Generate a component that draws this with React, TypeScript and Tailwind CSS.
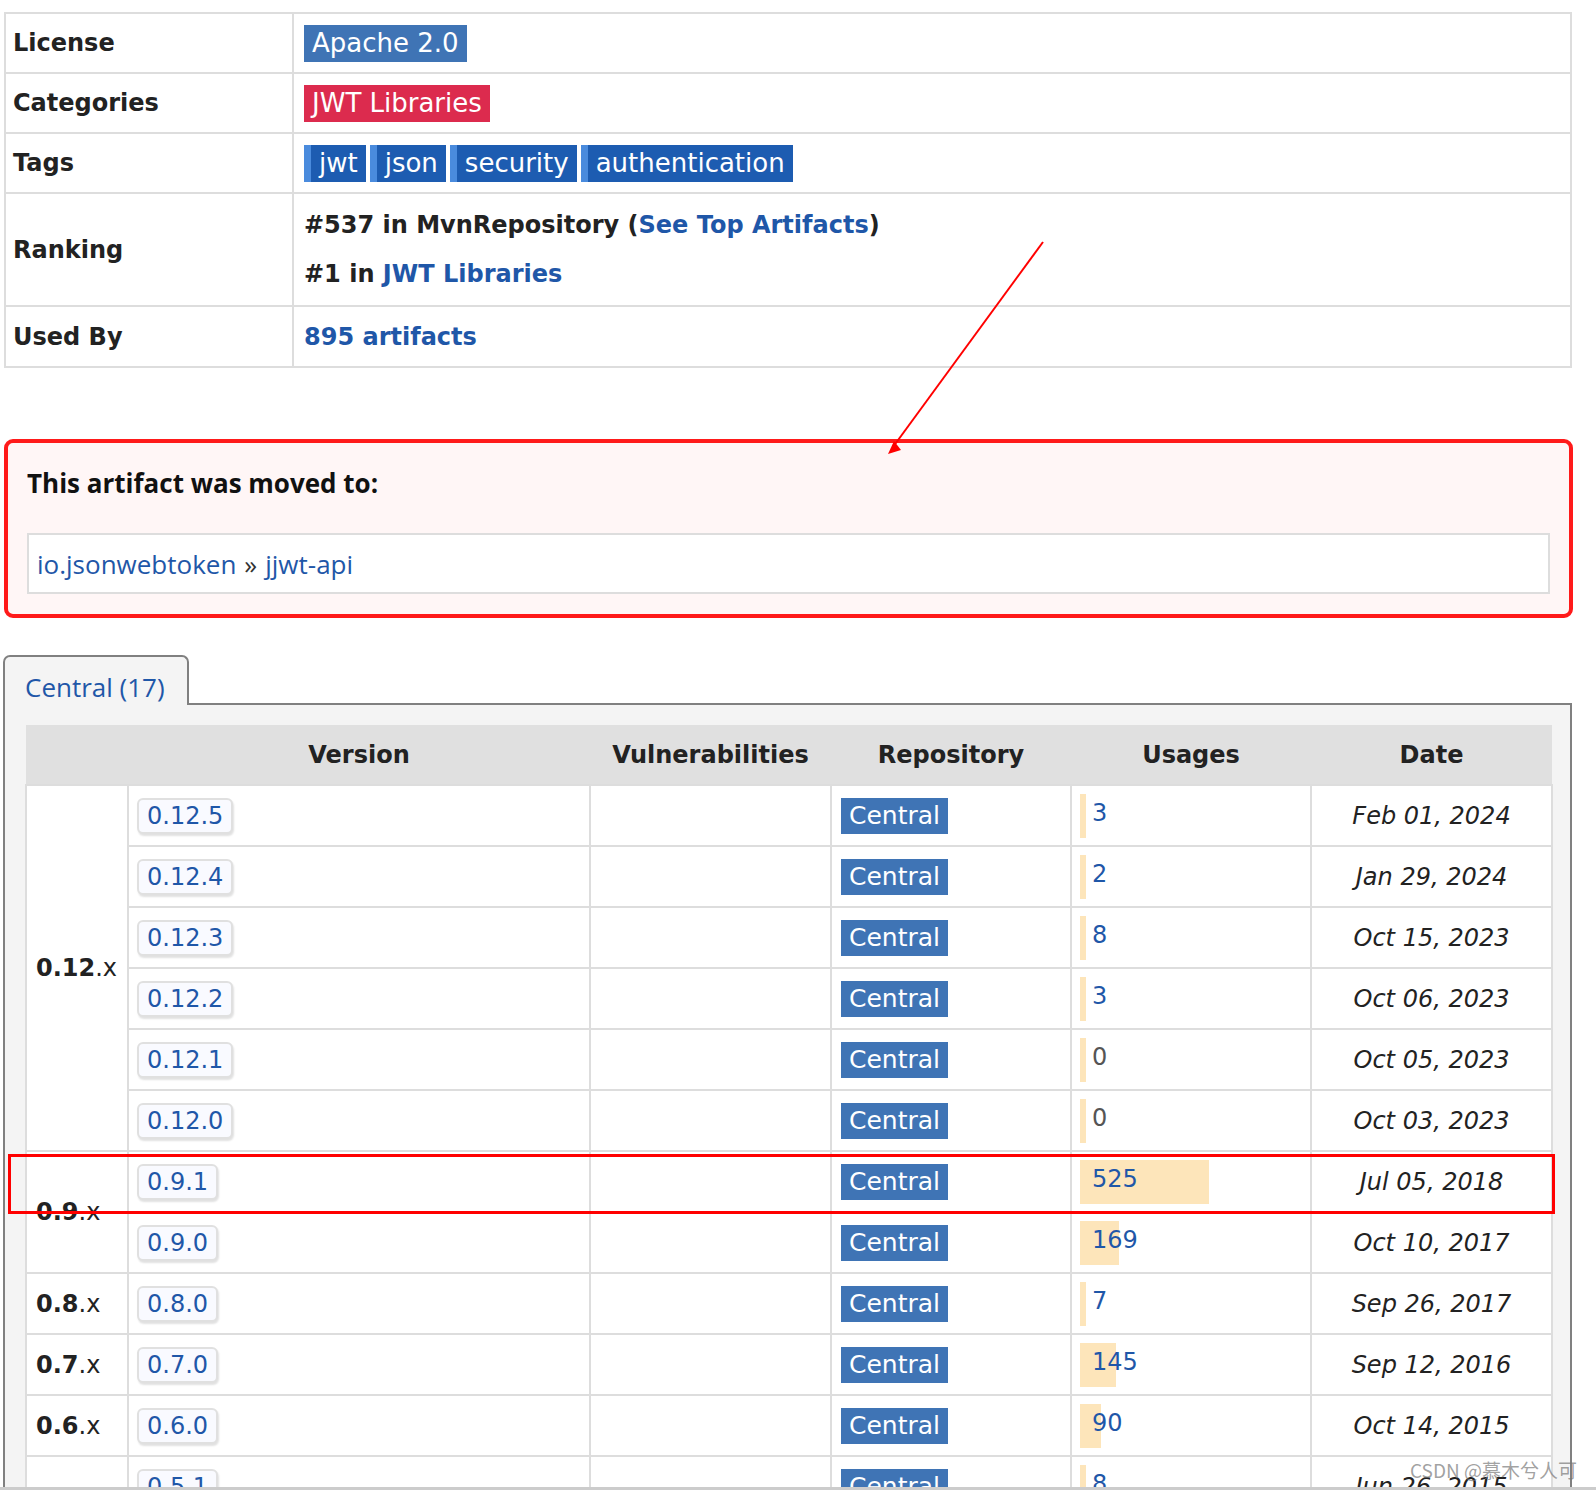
import React from "react";

type VersionRow = {
  group?: string;
  span?: number;
  version: string;
  usages: number;
  bar: number;
  date: string;
};

const rows: VersionRow[] = [
  { group: "0.12", span: 6, version: "0.12.5", usages: 3, bar: 6, date: "Feb 01, 2024" },
  { version: "0.12.4", usages: 2, bar: 6, date: "Jan 29, 2024" },
  { version: "0.12.3", usages: 8, bar: 6, date: "Oct 15, 2023" },
  { version: "0.12.2", usages: 3, bar: 6, date: "Oct 06, 2023" },
  { version: "0.12.1", usages: 0, bar: 6, date: "Oct 05, 2023" },
  { version: "0.12.0", usages: 0, bar: 6, date: "Oct 03, 2023" },
  { group: "0.9", span: 2, version: "0.9.1", usages: 525, bar: 129, date: "Jul 05, 2018" },
  { version: "0.9.0", usages: 169, bar: 39, date: "Oct 10, 2017" },
  { group: "0.8", span: 1, version: "0.8.0", usages: 7, bar: 6, date: "Sep 26, 2017" },
  { group: "0.7", span: 1, version: "0.7.0", usages: 145, bar: 36, date: "Sep 12, 2016" },
  { group: "0.6", span: 1, version: "0.6.0", usages: 90, bar: 21, date: "Oct 14, 2015" },
  { group: "0.5", span: 2, version: "0.5.1", usages: 8, bar: 6, date: "Jun 26, 2015" },
  { version: "0.5.0", usages: 1, bar: 6, date: "Jun 10, 2015" },
];

const tags = ["jwt", "json", "security", "authentication"];

function InfoRow({ label, height, children }: { label: string; height: string; children: React.ReactNode }) {
  return (
    <tr className={height}>
      <th className="w-[288px] border-2 border-[#dddddd] pl-[7px] text-left align-middle font-bold">{label}</th>
      <td className="border-2 border-[#dddddd] pl-[10px] align-middle">{children}</td>
    </tr>
  );
}

export default function App() {
  return (
    <div className="relative h-[1490px] w-[1596px] overflow-hidden bg-white font-['DejaVu_Sans',sans-serif] text-[24px] leading-[28px] text-[#222222]">
      <div className="h-[1487px] overflow-hidden pl-[3px] pt-[12px]">
        {/* artifact info */}
        <table className="ml-[1px] w-[1568px] border-collapse border-2 border-[#dddddd]">
          <tbody>
            <InfoRow label="License" height="h-[60px]">
              <span className="inline-flex h-[37px] items-center bg-[#3f74b5] px-[8px] text-[26px] text-white">Apache 2.0</span>
            </InfoRow>
            <InfoRow label="Categories" height="h-[60px]">
              <span className="inline-flex h-[37px] items-center bg-[#dc2b4e] px-[8px] text-[26px] text-white">JWT Libraries</span>
            </InfoRow>
            <InfoRow label="Tags" height="h-[60px]">
              <div className="flex gap-[4px]">
                {tags.map((t) => (
                  <span
                    key={t}
                    className="inline-flex h-[37px] items-center border-l-[7px] border-[#4a8bdd] bg-[#1d5cb1] pl-[8px] pr-[8px] text-[26px] text-white"
                  >
                    {t}
                  </span>
                ))}
              </div>
            </InfoRow>
            <InfoRow label="Ranking" height="h-[113px]">
              <div className="flex flex-col gap-[19px] font-bold leading-[30px]">
                <span>
                  #537 in MvnRepository (<span className="text-[#1f57a8]">See Top Artifacts</span>)
                </span>
                <span>
                  #1 in <span className="text-[#1f57a8]">JWT Libraries</span>
                </span>
              </div>
            </InfoRow>
            <InfoRow label="Used By" height="h-[61px]">
              <span className="font-bold text-[#1f57a8]">895 artifacts</span>
            </InfoRow>
          </tbody>
        </table>

        {/* moved notice */}
        <div className="ml-[1px] mt-[71px] w-[1569px] rounded-[9px] border-4 border-[#ff1a1a] bg-[#fff6f6] px-[19px] pb-[20px] pt-[25px] font-['Open_Sans',sans-serif]">
          <div className="text-[26px] font-bold leading-[30px] text-[#111111]">This artifact was moved to:</div>
          <div className="mt-[35px] flex h-[61px] items-center border-2 border-[#dddddd] bg-white px-[8px] text-[26px] text-[#1f57a8]">
            io.jsonwebtoken <span className="mx-[8px] text-[#333333]">»</span> jjwt-api
          </div>
        </div>

        {/* versions tab */}
        <div className="relative z-10 mt-[37px] -mb-[2px] h-[50px] w-[186px] rounded-t-[7px] border-2 border-b-0 border-[#808080] bg-[#f4f4f4] pl-[20px] pt-[12px] font-['Open_Sans',sans-serif] text-[26px] leading-[36px] text-[#1f57a8]">
          Central (17)
        </div>
        <div className="w-[1569px] border-2 border-[#808080] bg-[#f4f4f4] pb-[20px] pl-[20px] pr-[19px] pt-[20px]">
          <table className="w-[1526px] table-fixed border-collapse">
            <colgroup>
              <col className="w-[102px]" />
              <col className="w-[462px]" />
              <col className="w-[241px]" />
              <col className="w-[240px]" />
              <col className="w-[240px]" />
              <col className="w-[241px]" />
            </colgroup>
            <thead>
              <tr className="h-[60px] bg-[#e0e0e0] font-bold">
                <th />
                <th className="text-center">Version</th>
                <th className="text-center">Vulnerabilities</th>
                <th className="text-center">Repository</th>
                <th className="text-center">Usages</th>
                <th className="text-center">Date</th>
              </tr>
            </thead>
            <tbody>
              {rows.map((r) => (
                <tr key={r.version} className="h-[61px] bg-white">
                  {r.group && (
                    <td rowSpan={r.span} className="border-2 border-[#dddddd] pl-[9px] align-middle">
                      <span className="font-bold">{r.group}</span>.x
                    </td>
                  )}
                  <td className="border-2 border-[#dddddd] px-[8px] align-middle">
                    <span className="inline-flex h-[36px] items-center rounded-[6px] border-2 border-[#e0e0e0] bg-[#f9faff] px-[8px] text-[#1f57a8] shadow-[1px_2px_2px_rgba(0,0,0,0.12)]">
                      {r.version}
                    </span>
                  </td>
                  <td className="border-2 border-[#dddddd]" />
                  <td className="border-2 border-[#dddddd] pl-[9px] align-middle">
                    <span className="inline-flex h-[36px] items-center bg-[#3f74b5] px-[8px] text-[25px] text-white">Central</span>
                  </td>
                  <td className="border-2 border-[#dddddd] pl-[8px] align-middle">
                    <div className="relative h-[44px]">
                      <div className="absolute left-0 top-0 h-full bg-[#fde5ba]" style={{ width: r.bar }} />
                      <div className={`relative pl-[12px] pt-[5px] leading-[29px] ${r.usages === 0 ? "text-[#555555]" : "text-[#1f57a8]"}`}>
                        {r.usages}
                      </div>
                    </div>
                  </td>
                  <td className="border-2 border-[#dddddd] text-center align-middle italic">{r.date}</td>
                </tr>
              ))}
            </tbody>
          </table>
        </div>
      </div>
      <div className="h-[3px] bg-[#cccccc]" />

      {/* annotations */}
      <svg className="pointer-events-none absolute left-0 top-0" width="1596" height="1490">
        <line x1="1043" y1="242" x2="893" y2="447" stroke="#ff0000" strokeWidth="2" />
        <polygon points="888,454 894,441 901,450" fill="#ff0000" />
      </svg>
      <div className="pointer-events-none absolute left-[8px] top-[1154px] h-[60px] w-[1547px] border-[3px] border-[#ff0000]" />
      <div className="pointer-events-none absolute left-[1410px] top-[1458px] font-['Noto_Sans_CJK_SC',sans-serif] text-[19px] leading-[24px] text-[rgba(120,120,120,0.7)]">
        CSDN @慕木兮人可
      </div>
    </div>
  );
}
